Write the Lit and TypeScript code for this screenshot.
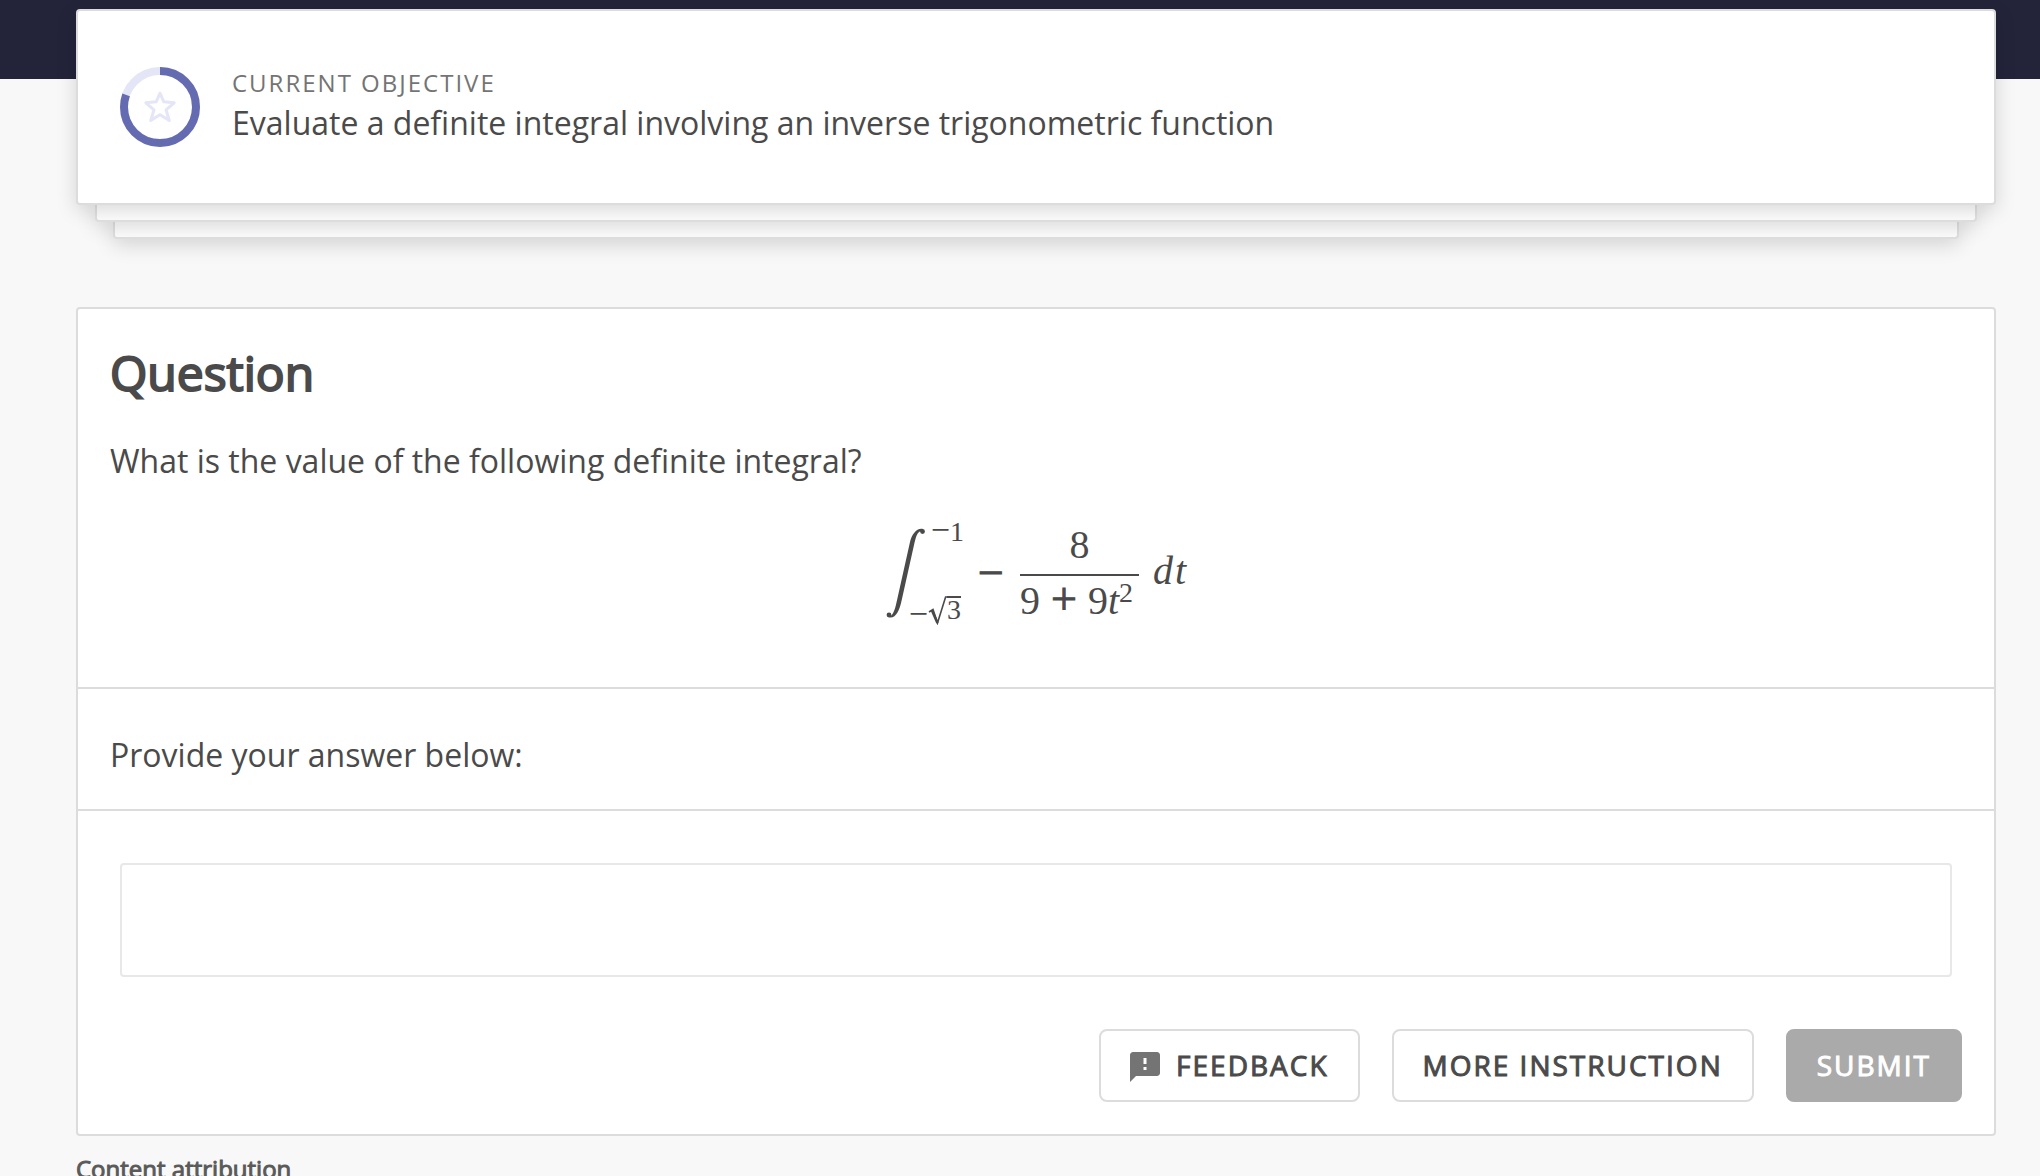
import { LitElement, html, css, svg } from "lit";
import { customElement, property, state } from "lit/decorators.js";

@customElement("progress-star")
class ProgressStar extends LitElement {
  @property({ type: Number }) value = 0;

  static styles = css`
    :host {
      display: block;
      flex: none;
      width: 80px;
      height: 80px;
    }
    .ring {
      display: block;
      width: 100%;
      height: 100%;
    }
    .track,
    .bar {
      fill: none;
      stroke-width: 8;
    }
    .track {
      stroke: #e4e5f7;
    }
    .bar {
      stroke: #656bb0;
    }
    .star {
      fill: none;
      stroke: #e4e5f7;
      stroke-width: 3;
      stroke-linejoin: round;
    }
  `;

  render() {
    return html`
      <svg class="ring" viewBox="0 0 80 80" role="img" aria-label="Progress">
        <circle class="track" cx="40" cy="40" r="36"></circle>
        ${svg`<circle class="bar" cx="40" cy="40" r="36" pathLength="100"
          stroke-dasharray="${this.value} 100" transform="rotate(-90 40 40)"></circle>`}
        <path
          class="star"
          d="M40 26.2 43.8 34.8 54.2 35.8 46 42.8 49.3 53.4 40 47.8 30.7 53.4 34 42.8 25.8 35.8 36.2 34.8Z"
        ></path>
      </svg>
    `;
  }
}

@customElement("integral-formula")
class IntegralFormula extends LitElement {
  static styles = css`
    :host {
      display: block;
      padding-top: 8px;
      font-family: "Liberation Serif", "Times New Roman", serif;
      font-size: 40px;
      line-height: 40px;
      color: #4a4a4a;
    }
    .formula {
      display: flex;
      justify-content: center;
      align-items: center;
    }
    .integral {
      display: flex;
    }
    .sign {
      width: 40px;
      height: 90px;
      fill: #4a4a4a;
    }
    .limits {
      display: flex;
      flex-direction: column;
      justify-content: space-between;
      margin: -10px 0 -12px -17px;
      font-size: 28px;
      line-height: 28px;
    }
    .upper {
      padding-left: 22px;
    }
    .small-operator {
      font-size: 34px;
      line-height: 0;
    }
    .root {
      display: inline-flex;
      align-items: flex-end;
    }
    .radical {
      width: 19px;
      height: 29px;
      margin-bottom: -4px;
    }
    .radicand {
      border-top: 2px solid #4a4a4a;
      line-height: 23px;
    }
    .operator {
      font-size: 46px;
      line-height: 0;
      -webkit-text-stroke: 1px currentColor;
    }
    .minus {
      margin: 0 16px 0 14px;
      line-height: 40px;
    }
    .fraction {
      display: flex;
      flex-direction: column;
      text-align: center;
    }
    .numerator {
      padding-bottom: 9px;
      border-bottom: 2px solid #4a4a4a;
    }
    .denominator {
      padding: 5px 6px 0 0;
    }
    .plus {
      margin: 0 11px;
    }
    .power {
      font-size: 28px;
      line-height: 0;
      vertical-align: 12px;
    }
    .differential {
      display: flex;
      gap: 2px;
      margin-left: 14px;
      padding-bottom: 4px;
    }
    .variable {
      font-style: italic;
    }
  `;

  render() {
    return html`
      <div class="formula" role="math">
        <div class="integral">
          <svg class="sign" viewBox="0 0 40 90" aria-hidden="true">
            <path
              d="M37 1C31-.5 26 6 24 14L11.500 70C9.500 79 8 87 3.500 88.500L3.500 89.500C10 90.500 13.500 82 15.500 73L28 17C30 9 31 2 37 3Z"
            ></path>
            <circle cx="36.500" cy="3.500" r="2.400"></circle>
            <circle cx="3" cy="87" r="2.400"></circle>
          </svg>
          <div class="limits">
            <span class="upper"><span class="small-operator">−</span>1</span>
            <span class="lower"
              ><span class="small-operator">−</span
              ><span class="root"
                ><svg class="radical" viewBox="0 0 19 29" aria-hidden="true">
                  <path
                    d="M1 16 5 13.500 9.500 27 17.600 1H19"
                    fill="none"
                    stroke="#4a4a4a"
                    stroke-width="1.600"
                  ></path>
                  <path d="M4 14.500 9.500 27" stroke="#4a4a4a" stroke-width="2.600"></path></svg
                ><span class="radicand">3</span></span
              ></span
            >
          </div>
        </div>
        <span class="operator minus">−</span>
        <div class="fraction">
          <div class="numerator">8</div>
          <div class="denominator">
            9<span class="operator plus">+</span>9<span class="variable">t</span
            ><span class="power">2</span>
          </div>
        </div>
        <span class="differential variable"><span>d</span><span>t</span></span>
      </div>
    `;
  }
}

@customElement("app-root")
class AppRoot extends LitElement {
  @state() private answer = "";

  static styles = css`
    :host {
      display: block;
      height: 100vh;
      overflow: hidden auto;
      scrollbar-width: none;
      box-sizing: border-box;
      background: linear-gradient(#23243a 79px, #f8f8f8 79px);
      padding: 9px 44px 0 76px;
      font-family: "Open Sans", sans-serif;
      font-size: 32px;
      line-height: 48px;
      color: #4a4a4a;
    }
    h1,
    h2,
    p {
      margin: 0;
      font-weight: 400;
    }
    .objective {
      position: relative;
      z-index: 2;
      display: flex;
      align-items: center;
      gap: 32px;
      padding: 54px 42px;
      background: #fff;
      border: 2px solid #dcdcdc;
      border-radius: 4px;
      box-shadow: 0 6px 20px rgba(0, 0, 0, 0.15);
    }
    .objective-text {
      padding-bottom: 4px;
    }
    .eyebrow {
      font-size: 24px;
      line-height: 36px;
      letter-spacing: 2px;
      color: #747474;
    }
    .objective-title {
      font-size: 32px;
      line-height: 44px;
    }
    .sheet {
      position: relative;
      box-sizing: border-box;
      height: 17px;
      background: #fff;
      border: 2px solid #e2e2e2;
      border-top: 0;
      border-radius: 0 0 4px 4px;
      box-shadow: 0 6px 20px rgba(0, 0, 0, 0.15);
    }
    .sheet-near {
      z-index: 1;
      margin: 0 19px;
    }
    .sheet-far {
      z-index: 0;
      margin: 0 37px;
    }
    .card {
      margin-top: 68px;
      background: #fff;
      border: 2px solid #dcdcdc;
      border-radius: 4px;
    }
    .question {
      display: flex;
      flex-direction: column;
      gap: 32px;
      padding: 32px 32px 66px;
    }
    .heading {
      font-size: 48px;
      line-height: 64px;
      -webkit-text-stroke: 2px currentColor;
    }
    .prompt {
      display: block;
      padding: 42px 32px 30px;
      border-top: 2px solid #dcdcdc;
      border-bottom: 2px solid #dcdcdc;
    }
    .answer {
      padding: 52px 42px;
    }
    .field {
      display: block;
      box-sizing: border-box;
      width: 100%;
      height: 114px;
      padding: 0 24px;
      border: 2px solid #e8e8e8;
      border-radius: 4px;
      background: #fff;
      font: inherit;
      color: inherit;
      outline: none;
    }
    .actions {
      display: flex;
      justify-content: flex-end;
      gap: 32px;
      padding: 0 32px 32px;
    }
    .button {
      display: flex;
      align-items: center;
      gap: 16px;
      height: 73px;
      padding: 0 29px 2px;
      background: #fff;
      border: 2px solid #dcdcdc;
      border-radius: 8px;
      font: 400 28px/40px "Open Sans", sans-serif;
      letter-spacing: 2px;
      -webkit-text-stroke: 1px currentColor;
      color: #4a4a4a;
    }
    .submit {
      background: #aaa;
      border-color: #aaa;
      color: #fff;
    }
    .icon {
      width: 30px;
      height: 30px;
      margin-top: 4px;
      fill: #747474;
    }
    .attribution {
      padding-top: 15px;
      font-size: 24px;
      line-height: 36px;
      -webkit-text-stroke: 1px currentColor;
      color: #5a5a5a;
    }
  `;

  render() {
    return html`
      <header class="objective">
        <progress-star .value=${80.5}></progress-star>
        <div class="objective-text">
          <p class="eyebrow">CURRENT OBJECTIVE</p>
          <h1 class="objective-title">
            Evaluate a definite integral involving an inverse trigonometric function
          </h1>
        </div>
      </header>
      <div class="sheet sheet-near"></div>
      <div class="sheet sheet-far"></div>

      <main class="card">
        <section class="question">
          <h2 class="heading">Question</h2>
          <p>What is the value of the following definite integral?</p>
          <integral-formula></integral-formula>
        </section>
        <label class="prompt" for="answer">Provide your answer below:</label>
        <div class="answer">
          <input
            class="field"
            id="answer"
            type="text"
            autocomplete="off"
            .value=${this.answer}
            @input=${(e: Event) => (this.answer = (e.target as HTMLInputElement).value)}
          />
        </div>
        <div class="actions">
          <button class="button" type="button">
            <svg class="icon" viewBox="2 2 20 20" aria-hidden="true">
              <path
                d="M20 2H4c-1.1 0-1.99.9-1.99 2L2 22l4-4h14c1.1 0 2-.9 2-2V4c0-1.1-.9-2-2-2zm-7 12h-2v-2h2v2zm0-4h-2V6h2v4z"
              ></path>
            </svg>
            FEEDBACK
          </button>
          <button class="button" type="button">MORE INSTRUCTION</button>
          <button class="button submit" type="button" ?disabled=${this.answer === ""}>
            SUBMIT
          </button>
        </div>
      </main>
      <p class="attribution">Content attribution</p>
    `;
  }
}
